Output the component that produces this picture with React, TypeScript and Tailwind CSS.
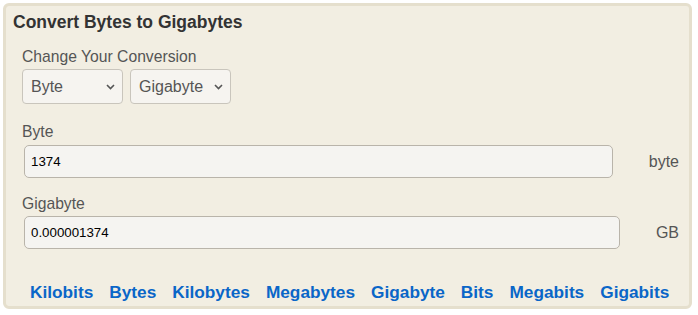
import React from "react";

const links = ["Kilobits", "Bytes", "Kilobytes", "Megabytes", "Gigabyte", "Bits", "Megabits", "Gigabits"];

function Chevron() {
    return (
        <svg className="pointer-events-none absolute right-[8px] top-[15px]" width="9" height="6" viewBox="0 0 9 6">
            <path d="M1 1l3.5 3.5L8 1" fill="none" stroke="#555" strokeWidth="1.6" />
        </svg>
    );
}

function Select({ value, width }: { value: string; width: string }) {
    return (
        <div className={`relative ${width}`}>
            <select
                defaultValue={value}
                className="h-[35px] w-full appearance-none rounded-[4px] border border-[#c9c5bc] bg-[#f6f4f0] pl-[8px] text-[16px] text-[#555] outline-none"
            >
                <option>{value}</option>
            </select>
            <Chevron />
        </div>
    );
}

export default function App() {
    return (
        <div className="bg-white pl-[3px] pt-[3px] font-['Liberation_Sans',Arial,sans-serif]">
            <div className="h-[306px] w-[689px] rounded-[6px] border-[3px] border-[#e5dfcd] bg-[#f2eee2]">
                {/* Title */}
                <h2 className="pl-[7px] pt-[6px] text-[17.5px] font-bold leading-[20px] text-[#333]">Convert Bytes to Gigabytes</h2>

                <div className="pl-[16px] pt-[16px]">
                    <p className="text-[15.7px] leading-[18px] text-[#555]">Change Your Conversion</p>
                    <div className="mt-[3px] flex gap-[7px]">
                        <Select value="Byte" width="w-[101px]" />
                        <Select value="Gigabyte" width="w-[101px]" />
                    </div>
                </div>

                {/* Byte field */}
                <div className="pl-[16px] pr-[10px] pt-[19px]">
                    <p className="text-[15.7px] leading-[18px] text-[#555]">Byte</p>
                    <div className="mt-[4px] flex items-center pl-[2px]">
                        <input
                            defaultValue="1374"
                            className="h-[33px] w-[589px] rounded-[5px] border border-[#b9b4aa] bg-[#f5f4f1] pl-[6px] text-[13.3px] text-black outline-none"
                        />
                        <span className="flex-1 text-right text-[16px] text-[#555]">byte</span>
                    </div>
                </div>

                {/* Gigabyte field */}
                <div className="pl-[16px] pr-[10px] pt-[17px]">
                    <p className="text-[15.7px] leading-[18px] text-[#555]">Gigabyte</p>
                    <div className="mt-[3px] flex items-center pl-[2px]">
                        <input
                            defaultValue="0.000001374"
                            className="h-[33px] w-[596px] rounded-[5px] border border-[#b9b4aa] bg-[#f5f4f1] pl-[6px] text-[13.3px] text-black outline-none"
                        />
                        <span className="flex-1 text-right text-[16px] text-[#555]">GB</span>
                    </div>
                </div>

                {/* Links */}
                <div className="flex gap-[16px] pl-[24px] pt-[33px]">
                    {links.map((l) => (
                        <a key={l} href="#" className="text-[17.25px] font-bold leading-[20px] text-[#0a66c8]">
                            {l}
                        </a>
                    ))}
                </div>
            </div>
        </div>
    );
}
